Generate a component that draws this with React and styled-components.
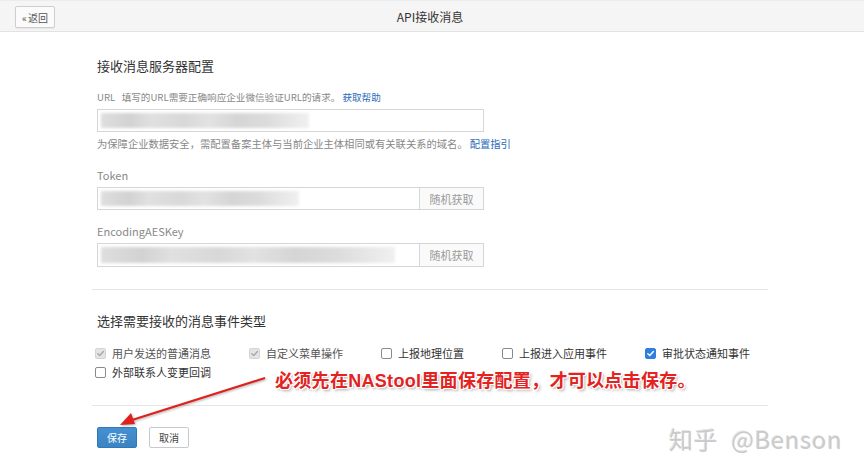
import React from 'react';
import styled, { createGlobalStyle } from 'styled-components';

const GlobalStyle = createGlobalStyle`
  html, body {
    margin: 0;
    padding: 0;
    background: #fff;
  }
  body {
    font-family: "Noto Sans CJK SC", "Noto Sans", sans-serif;
    color: #333;
  }
`;

const Page = styled.div`
  position: relative;
  width: 864px;
  height: 474px;
  overflow: hidden;
  background: #fff;
`;

const TopBar = styled.div`
  position: relative;
  height: 32px;
  background: #f5f5f5;
  border-top: 1px solid #ececec;
  border-bottom: 1px solid #e3e3e3;
  box-sizing: border-box;
  display: flex;
  align-items: center;
  justify-content: center;
`;

const BackButton = styled.button`
  position: absolute;
  left: 15px;
  top: 5px;
  height: 22px;
  width: 40px;
  padding: 0;
  border: 1px solid #cfcfcf;
  border-radius: 2px;
  background: #fbfbfb;
  font-family: inherit;
  font-size: 10px;
  color: #555;
  display: flex;
  align-items: center;
  justify-content: center;
  gap: 1px;
  box-shadow: 0 1px 1px rgba(0, 0, 0, 0.06);
`;

const Title = styled.div`
  font-size: 12px;
  color: #333;
  margin-left: -4px;
`;

const Main = styled.div`
  margin-left: 92px;
  width: 676px;
`;

const Section = styled.div`
  padding: 0 5px;
  display: flex;
  flex-direction: column;
`;

const Heading = styled.div`
  font-size: 13px;
  line-height: 18px;
  color: #333;
  margin-top: ${p => p.$top}px;
`;

const Label = styled.div`
  font-size: ${p => p.$size || 11}px;
  line-height: 16px;
  color: #888;
  margin-top: ${p => p.$top}px;
  white-space: nowrap;
`;

const Hint = styled.div`
  font-size: 10.3px;
  line-height: 14px;
  color: #888;
  margin-top: 5px;
  white-space: nowrap;
`;

const Link = styled.a`
  color: #2a6cb8;
  text-decoration: none;
  margin-left: 2px;
`;

const Field = styled.div`
  display: flex;
  width: 387px;
  height: ${p => p.$h || 23}px;
  margin-top: 4px;
  border: 1px solid #d6d6d6;
  box-sizing: border-box;
  background: #fff;
`;

const Redacted = styled.div`
  flex: 1;
  position: relative;
  overflow: hidden;
  &::before {
    content: '';
    position: absolute;
    left: 3px;
    top: 3px;
    bottom: 3px;
    width: ${p => p.$w}px;
    background: linear-gradient(
      90deg,
      #dedede 0%,
      #d2d2d2 14%,
      #e0e0e0 24%,
      #d8d8d8 40%,
      #e2e2e2 52%,
      #d5d5d5 66%,
      #dcdcdc 80%,
      #e8e8e8 92%,
      #f0f0f0 100%
    );
    filter: blur(1.5px);
  }
`;

const FieldButton = styled.button`
  width: 64px;
  border: none;
  border-left: 1px solid #d6d6d6;
  background: #fafafa;
  font-family: inherit;
  font-size: 11px;
  color: #999;
  padding: 0;
`;

const Divider = styled.div`
  height: 1px;
  background: #e6e6e6;
  margin-top: ${p => p.$top}px;
`;

const Options = styled.div`
  display: flex;
  flex-wrap: wrap;
  column-gap: 38px;
  row-gap: 5px;
  margin-top: 16px;
  margin-left: -2px;
`;

const Option = styled.label`
  display: flex;
  align-items: center;
  gap: 6px;
  font-size: 11px;
  line-height: 14px;
  color: ${p => (p.$disabled ? '#555' : '#333')};
`;

const Box = styled.span`
  width: 11px;
  height: 11px;
  box-sizing: border-box;
  border-radius: 2px;
  display: flex;
  align-items: center;
  justify-content: center;
  border: 1px solid
    ${p => (p.$state === 'on' ? '#2f7fe0' : p.$state === 'disabled' ? '#d4d4d4' : '#8a8a8a')};
  background: ${p => (p.$state === 'on' ? '#2f7fe0' : p.$state === 'disabled' ? '#e4e4e4' : '#fff')};
`;

const Actions = styled.div`
  display: flex;
  gap: 12px;
  margin-top: 21px;
`;

const Button = styled.button`
  width: 40px;
  height: 21px;
  padding: 0;
  box-sizing: border-box;
  border-radius: 2px;
  font-family: inherit;
  font-size: 10px;
  border: 1px solid ${p => (p.$primary ? '#3178b8' : '#c9c9c9')};
  background: ${p => (p.$primary ? 'linear-gradient(#4590d0, #3a84c4)' : '#fff')};
  color: ${p => (p.$primary ? '#fff' : '#444')};
`;

const Callout = styled.div`
  position: absolute;
  left: 275px;
  top: 368px;
  font-size: 18px;
  line-height: 22px;
  font-weight: 700;
  color: #e2231f;
  white-space: nowrap;
  letter-spacing: 0.3px;
  text-shadow: 1px 1px 0 #fff, -1px -1px 0 #fff, 1px -1px 0 #fff, -1px 1px 0 #fff,
    2px 2px 3px rgba(0, 0, 0, 0.35);
  b {
    font-family: "Liberation Sans", sans-serif;
    font-weight: 700;
  }
`;

const Arrow = styled.svg`
  position: absolute;
  left: 110px;
  top: 370px;
  overflow: visible;
  filter: drop-shadow(1px 1px 1px rgba(0, 0, 0, 0.3));
`;

const Watermark = styled.div`
  position: absolute;
  left: 669px;
  top: 424px;
  font-size: 24px;
  line-height: 30px;
  color: #cacaca;
  white-space: nowrap;
  letter-spacing: 0.6px;
  word-spacing: 7px;
  text-shadow: 1px 1px 0 #fff, -1px -1px 0 #a0a0a044;
`;

const Check = ({ color }) => (
  <svg width="9" height="9" viewBox="0 0 10 10">
    <path d="M2 5.2 L4.2 7.3 L8.2 2.8" fill="none" stroke={color} strokeWidth="1.6" strokeLinecap="round" strokeLinejoin="round" />
  </svg>
);

const events = [
  { name: '用户发送的普通消息', state: 'disabled' },
  { name: '自定义菜单操作', state: 'disabled' },
  { name: '上报地理位置', state: 'off' },
  { name: '上报进入应用事件', state: 'off' },
  { name: '审批状态通知事件', state: 'on' },
  { name: '外部联系人变更回调', state: 'off' },
];

export default function App() {
  return (
    <Page>
      <GlobalStyle />
      <TopBar>
        <BackButton>
          <span>«</span>
          <span>返回</span>
        </BackButton>
        <Title>API接收消息</Title>
      </TopBar>

      <Main>
        <Section>
          <Heading $top={25}>接收消息服务器配置</Heading>
          <Label $top={14} $size={9.6}>
            URL&nbsp;&nbsp;&nbsp;填写的URL需要正确响应企业微信验证URL的请求。<Link>获取帮助</Link>
          </Label>
          <Field>
            <Redacted $w={208} />
          </Field>
          <Hint>
            为保障企业数据安全，需配置备案主体与当前企业主体相同或有关联关系的域名。<Link>配置指引</Link>
          </Hint>

          <Label $top={16}>Token</Label>
          <Field>
            <Redacted $w={198} />
            <FieldButton>随机获取</FieldButton>
          </Field>

          <Label $top={13}>EncodingAESKey</Label>
          <Field $h={24}>
            <Redacted $w={294} />
            <FieldButton>随机获取</FieldButton>
          </Field>
        </Section>

        <Divider $top={22} />

        <Section>
          <Heading $top={22}>选择需要接收的消息事件类型</Heading>
          <Options>
            {events.map(ev => (
              <Option key={ev.name} $disabled={ev.state === 'disabled'}>
                <Box $state={ev.state}>
                  {ev.state === 'on' && <Check color="#fff" />}
                  {ev.state === 'disabled' && <Check color="#a9a9a9" />}
                </Box>
                {ev.name}
              </Option>
            ))}
          </Options>
        </Section>

        <Divider $top={26} />

        <Section>
          <Actions>
            <Button $primary>保存</Button>
            <Button>取消</Button>
          </Actions>
        </Section>
      </Main>

      <Callout>
        必须先在<b>NAStool</b>里面保存配置，才可以点击保存。
      </Callout>

      <Arrow width="170" height="60">
        <line x1="155" y1="8" x2="22" y2="50" stroke="#e0201c" strokeWidth="2.2" />
        <path d="M10 55 L21 43 L25 54 Z" fill="#e0201c" />
      </Arrow>

      <Watermark>知乎 @Benson</Watermark>
    </Page>
  );
}
